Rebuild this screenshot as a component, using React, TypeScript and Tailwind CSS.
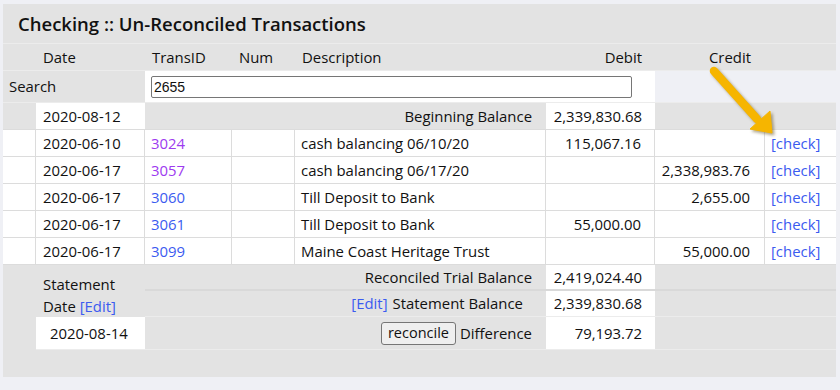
import React from 'react'

type Txn = {
  date: string
  id: string
  visited: boolean
  desc: string
  debit: string
  credit: string
}

const txns: Txn[] = [
  { date: '2020-06-10', id: '3024', visited: true, desc: 'cash balancing 06/10/20', debit: '115,067.16', credit: '' },
  { date: '2020-06-17', id: '3057', visited: true, desc: 'cash balancing 06/17/20', debit: '', credit: '2,338,983.76' },
  { date: '2020-06-17', id: '3060', visited: false, desc: 'Till Deposit to Bank', debit: '', credit: '2,655.00' },
  { date: '2020-06-17', id: '3061', visited: false, desc: 'Till Deposit to Bank', debit: '55,000.00', credit: '' },
  { date: '2020-06-17', id: '3099', visited: false, desc: 'Maine Coast Heritage Trust', debit: '', credit: '55,000.00' },
]

const cols = 'grid grid-cols-[33px_109px_87px_63px_251px_109px_110px_71px]'
const cell = 'h-[27px] flex items-center bg-white border-r border-b border-[#dcdcdc]'

function Arrow() {
  return (
    <svg className="absolute left-[700px] top-[60px] pointer-events-none" width="90" height="90" viewBox="700 60 90 90">
      <defs>
        <filter id="sh" x="-30%" y="-30%" width="160%" height="160%">
          <feGaussianBlur stdDeviation="1.6" />
        </filter>
      </defs>
      <g transform="translate(2 2)" fill="#6b5a2a" stroke="#6b5a2a" opacity="0.55" filter="url(#sh)">
        <line x1="714" y1="71" x2="757" y2="119" strokeWidth="8.5" strokeLinecap="round" />
        <polygon points="750,129 770,111 772,133" strokeWidth="1" />
      </g>
      <line x1="714" y1="71" x2="757" y2="119" stroke="#f6b500" strokeWidth="8.5" strokeLinecap="round" />
      <polygon points="750,129 770,111 772,133" fill="#f6b500" stroke="#f6b500" strokeWidth="1" strokeLinejoin="round" />
    </svg>
  )
}

export default function App() {
  return (
    <div className="relative w-[840px] h-[390px] bg-[#eff0f5] pt-[4px] pl-[3px] font-['Open_Sans',sans-serif] text-[14.9px] text-[#111]">
      <div className="w-[833px] bg-[#e3e3e3] pb-[27px]">
        {/* title */}
        <div className="h-[40px] flex items-center pl-[15px] border-b border-[#ececec] text-[18.5px] font-semibold text-[#111]">
          Checking :: Un-Reconciled Transactions
        </div>

        {/* header */}
        <div className={`${cols} h-[27px] items-center border-b border-[#ececec]`}>
          <div />
          <div className="pl-[7px]">Date</div>
          <div className="pl-[7px]">TransID</div>
          <div className="pl-[7px]">Num</div>
          <div className="pl-[7px]">Description</div>
          <div className="text-right pr-[13px]">Debit</div>
          <div className="text-right pr-[14px]">Credit</div>
          <div />
        </div>

        {/* search */}
        <div className={`${cols} h-[32px] border-b border-[#ececec]`}>
          <div className="col-span-2 flex items-center pl-[6px]">Search</div>
          <div className="col-span-4 bg-white flex items-center pl-[6px]">
            <input
              defaultValue="2655"
              className="w-[481px] h-[22px] border border-[#767676] rounded-[2px] px-[2px] text-[14px] font-['Liberation_Sans',sans-serif] outline-none"
            />
          </div>
          <div className="col-span-2 bg-[#eff0f5]" />
        </div>

        {/* beginning balance */}
        <div className={`${cols} h-[27px] border-b border-[#dcdcdc]`}>
          <div />
          <div className="bg-white flex items-center pl-[7px]">2020-08-12</div>
          <div className="col-span-3 flex items-center justify-end pr-[14px]">Beginning Balance</div>
          <div className="bg-white flex items-center justify-end pr-[13px]">2,339,830.68</div>
          <div className="col-span-2" />
        </div>

        {/* transactions */}
        {txns.map((t, i) => (
          <div key={i} className={cols}>
            <div className={`${cell} border-l-0`} />
            <div className={`${cell} pl-[7px]`}>{t.date}</div>
            <div className={`${cell} pl-[6px]`}>
              <a href="#" className={t.visited ? 'text-[#9d3bf0]' : 'text-[#3b5bf0]'}>{t.id}</a>
            </div>
            <div className={cell} />
            <div className={`${cell} pl-[6px]`}>{t.desc}</div>
            <div className={`${cell} justify-end pr-[13px]`}>{t.debit}</div>
            <div className={`${cell} justify-end pr-[14px]`}>{t.credit}</div>
            <div className={`${cell} pl-[6px] border-r-0`}>
              <a href="#" className="text-[#3b5bf0]">[check]</a>
            </div>
          </div>
        ))}

        {/* footer */}
        <div className={`${cols} grid-rows-[26px_26px_33px]`}>
          <div className="row-span-3" />
          <div className="row-span-2 pl-[7px] pt-[8px] leading-[22px]">
            Statement
            <br />
            Date <a href="#" className="text-[#3b5bf0]">[Edit]</a>
          </div>
          <div className="col-span-3 flex items-center justify-end pr-[14px] border-b-2 border-[#d9d9d9]">
            Reconciled Trial Balance
          </div>
          <div className="bg-white flex items-center justify-end pr-[13px] border-b-2 border-[#d9d9d9]">2,419,024.40</div>
          <div className="col-span-2 border-b-2 border-[#d9d9d9]" />

          <div className="col-span-3 flex items-center justify-end pr-[23px] border-b border-[#ececec]">
            <a href="#" className="text-[#3b5bf0] mr-[5px]">[Edit]</a>Statement Balance
          </div>
          <div className="bg-white flex items-center justify-end pr-[13px] border-b border-[#ececec]">2,339,830.68</div>
          <div className="col-span-2 border-b border-[#ececec]" />

          <div className="bg-white flex items-center pl-[14px] border-b border-[#ececec]">2020-08-14</div>
          <div className="col-span-3 flex items-center justify-end pr-[14px] border-b border-[#ececec]">
            <button className="h-[23px] px-[6px] mr-[4px] bg-[#efefef] border border-[#767676] rounded-[3px] text-[14.5px] leading-none">
              reconcile
            </button>
            Difference
          </div>
          <div className="bg-white flex items-center justify-end pr-[13px] border-b border-[#ececec]">79,193.72</div>
          <div className="col-span-2 border-b border-[#ececec]" />
        </div>
      </div>
      <Arrow />
    </div>
  )
}
